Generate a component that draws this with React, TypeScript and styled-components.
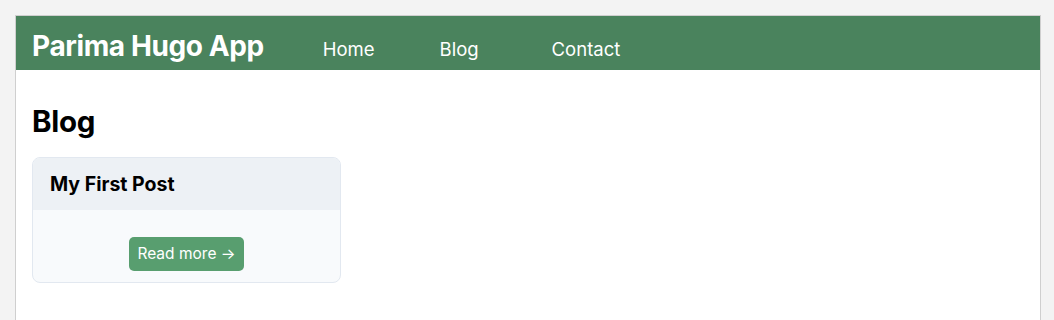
import React from "react";
import styled, { createGlobalStyle } from "styled-components";

const Global = createGlobalStyle`
  html, body { margin: 0; padding: 0; background: #f3f3f3; }
  body { font-family: Inter, "Noto Sans", "Liberation Sans", sans-serif; }
  * { box-sizing: border-box; }
`;

const Frame = styled.div`
  margin: 15px 13px 0 15px;
  height: 320px;
  background: #ffffff;
  border: 1px solid #cfcfcf;
  border-bottom: none;
`;

const Header = styled.header`
  display: flex;
  align-items: baseline;
  gap: 59px;
  height: 54px;
  padding: 14px 16px 0;
  background: #4a835d;
  color: #ffffff;
`;

const Brand = styled.div`
  font-size: 28px;
  font-weight: 700;
  letter-spacing: -0.4px;
  line-height: 1.2;
`;

const Nav = styled.nav`
  display: flex;
  align-items: baseline;
  gap: 65px;
`;

const NavLink = styled.a<{ $extra?: number }>`
  margin-left: ${(p) => p.$extra ?? 0}px;
  font-size: 18.5px;
  color: #ffffff;
  text-decoration: none;
`;

const Main = styled.main`
  padding: 16px 16px;
`;

const Title = styled.h1`
  margin: 21px 0 20px;
  font-size: 29.5px;
  font-weight: 700;
  line-height: 1;
  color: #000;
  letter-spacing: -0.3px;
`;

const Card = styled.article`
  width: 309px;
  border: 1px solid #e2e8f0;
  border-radius: 8px;
  overflow: hidden;
  background: #f8fafc;
`;

const CardHeader = styled.div`
  display: flex;
  align-items: center;
  height: 52px;
  padding: 0 17px;
  background: #edf1f5;
  font-size: 19.5px;
  font-weight: 700;
  color: #000;
`;

const CardBody = styled.div`
  display: flex;
  justify-content: center;
  padding: 27px 16px 11px;
`;

const Button = styled.a`
  display: inline-flex;
  align-items: center;
  height: 34px;
  padding: 0 8px;
  background: #589e6f;
  border-radius: 5px;
  color: #ffffff;
  font-size: 15.5px;
  text-decoration: none;
`;

export default function App() {
  return (
    <>
      <Global />
      <Frame>
        <Header>
          <Brand>Parima Hugo App</Brand>
          <Nav>
            <NavLink href="#">Home</NavLink>
            <NavLink href="#">Blog</NavLink>
            <NavLink $extra={8} href="#">Contact</NavLink>
          </Nav>
        </Header>
        <Main>
          <Title>Blog</Title>
          <Card>
            <CardHeader>My First Post</CardHeader>
            <CardBody>
              <Button href="#">Read more →</Button>
            </CardBody>
          </Card>
        </Main>
      </Frame>
    </>
  );
}
